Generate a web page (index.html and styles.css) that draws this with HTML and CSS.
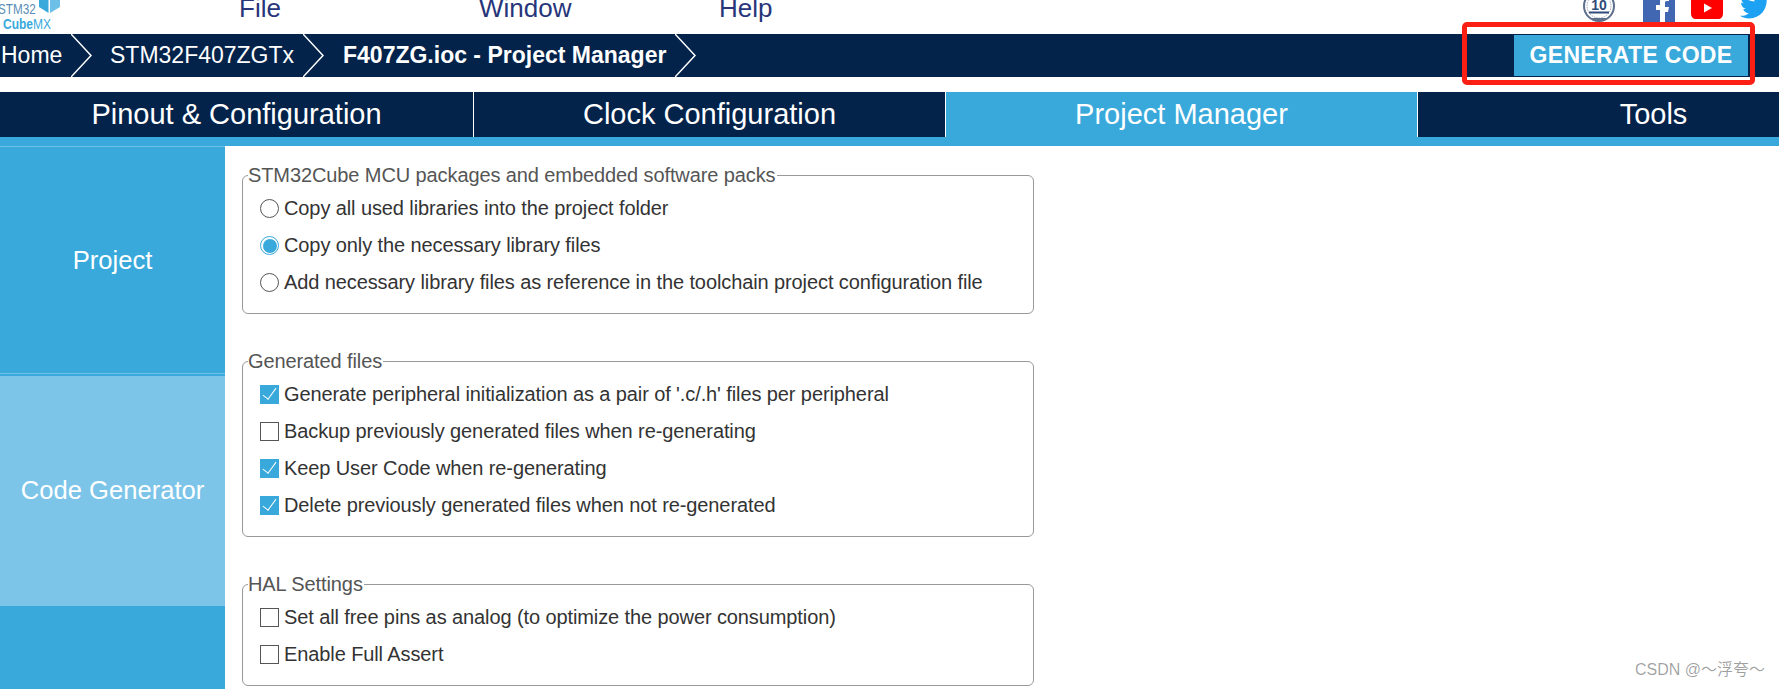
FILE: index.html
```html
<!DOCTYPE html>
<html lang="en">

<head>
  <meta charset="UTF-8">
  <meta name="viewport" content="width=device-width, initial-scale=1.0">
  <title>STM32CubeMX - Project Manager</title>
  <link rel="stylesheet" href="styles.css">
</head>

<body>
  <header class="topbar">
    <div class="logo">
      <svg class="logo-cube" viewBox="0 0 21 13" width="21" height="13">
        <path d="M0 0h9.500v13L0 7z" fill="#39a9dc" />
        <path d="M11 0h10v7l-10 6z" fill="#6cc0e8" />
      </svg>
      <div class="logo-stm">STM32</div>
      <div class="logo-cubemx"><b>Cube</b>MX</div>
    </div>
    <nav class="menu">
      <span class="menu-item">File</span>
      <span class="menu-item">Window</span>
      <span class="menu-item">Help</span>
    </nav>
    <div class="social">
      <svg class="seal" viewBox="0 0 32 22" width="32" height="22">
        <circle cx="16" cy="6" r="15" fill="#fff" stroke="#5d6f8c" stroke-width="2" />
        <circle cx="16" cy="6" r="12" fill="none" stroke="#9aa6b8" stroke-width="1" stroke-dasharray="1.500 1" />
        <text class="seal-num" x="16" y="10" text-anchor="middle">10</text>
        <path d="M6 12.500h20" stroke="#2d4a7a" stroke-width="2" />
        <path d="M9 19h14" stroke="#5d6f8c" stroke-width="2" />
      </svg>
      <svg class="fb" viewBox="0 0 32 22" width="32" height="22">
        <rect width="32" height="22" fill="#4267b2" />
        <path d="M17 22V10h-4V5h4V2c0-4 2-6 6-6h3v5h-2c-2 0-2 1-2 2v4h4l-1 5h-3v12z" fill="#fff" />
      </svg>
      <svg class="yt" viewBox="0 0 32 19" width="32" height="19">
        <path d="M0 0h32v13c0 4-2 6-5 6H5c-3 0-5-2-5-6z" fill="#ff0000" />
        <path d="M13 3.500l8 4.500-8 4.500z" fill="#fff" />
      </svg>
      <svg class="tw" viewBox="0 0 30 21" width="30" height="21">
        <path d="M30 -3c-1 .5-2 1-3.500 1.200 1.200-.8 2-2 2.500-3.200-1.200 .7-2.500 1.200-3.900 1.500C23.900-5 22.300-6 20.500-6c-3.400 0-6.100 2.800-6.100 6.200 0 .5 0 1 .2 1.400C9.500 1.300 5 -1.100 2 -4.900c-.5 .9-.8 2-.8 3.100 0 2.200 1.100 4.100 2.700 5.200-1 0-2-.3-2.800-.8v.1c0 3 2.100 5.500 4.900 6.100-.5 .1-1.100 .2-1.600 .2-.4 0-.8 0-1.200-.1 .8 2.500 3 4.300 5.700 4.300-2.100 1.700-4.700 2.600-7.600 2.600-.5 0-1 0-1.500-.1 2.700 1.800 5.900 2.800 9.400 2.800 11.300 0 17.500-9.500 17.500-17.700v-.8c1.200-.9 2.200-2 3-3.200z" fill="#1da1f2" />
      </svg>
    </div>
  </header>

  <div class="crumbs">
    <span class="crumb crumb-home">Home</span>
    <svg class="chevron" viewBox="0 0 21 43" width="21" height="43"><path d="M0 0l20 21.500L0 43" /></svg>
    <span class="crumb crumb-chip">STM32F407ZGTx</span>
    <svg class="chevron" viewBox="0 0 21 43" width="21" height="43"><path d="M0 0l20 21.500L0 43" /></svg>
    <span class="crumb crumb-current">F407ZG.ioc - Project Manager</span>
    <svg class="chevron" viewBox="0 0 21 43" width="21" height="43"><path d="M0 0l20 21.500L0 43" /></svg>
    <button class="generate">GENERATE CODE</button>
  </div>

  <div class="tabs">
    <div class="tab">Pinout &amp; Configuration</div>
    <div class="tab">Clock Configuration</div>
    <div class="tab active">Project Manager</div>
    <div class="tab">Tools</div>
  </div>
  <div class="tab-strip"></div>

  <div class="content">
    <aside class="sidebar">
      <div class="side-item side-project">Project</div>
      <div class="side-item side-code">Code Generator</div>
    </aside>

    <main class="panels">
      <fieldset class="group group-packages">
        <legend>STM32Cube MCU packages and embedded software packs</legend>
        <div class="row"><span class="radio"></span>Copy all used libraries into the project folder</div>
        <div class="row"><span class="radio checked"></span>Copy only the necessary library files</div>
        <div class="row"><span class="radio"></span>Add necessary library files as reference in the toolchain project configuration file</div>
      </fieldset>

      <fieldset class="group group-files">
        <legend>Generated files</legend>
        <div class="row"><span class="check checked"></span>Generate peripheral initialization as a pair of '.c/.h' files per peripheral</div>
        <div class="row"><span class="check"></span>Backup previously generated files when re-generating</div>
        <div class="row"><span class="check checked"></span>Keep User Code when re-generating</div>
        <div class="row"><span class="check checked"></span>Delete previously generated files when not re-generated</div>
      </fieldset>

      <fieldset class="group group-hal">
        <legend>HAL Settings</legend>
        <div class="row"><span class="check"></span>Set all free pins as analog (to optimize the power consumption)</div>
        <div class="row"><span class="check"></span>Enable Full Assert</div>
      </fieldset>
    </main>
  </div>

  <!-- annotation drawn over the screenshot -->
  <div class="highlight"></div>
  <div class="watermark">CSDN @～浮夸～</div>
</body>

</html>
```

FILE: styles.css
```css
html,
body {
  margin: 0;
  height: 689px;
  overflow: hidden;
}

body {
  position: relative;
  font-family: "Liberation Sans", Arial, sans-serif;
  background-color: #fff;
  color: #333;
}

/* top bar */
.topbar {
  display: flex;
  height: 34px;
  overflow: hidden;
}

.logo {
  position: relative;
  width: 239px;
  flex: none;
}

.logo-cube {
  position: absolute;
  left: 39px;
  top: 0;
}

.logo-stm {
  margin: 2px 0 0 -2px;
  height: 14px;
  font-size: 15px;
  line-height: 14px;
  color: #5b8db5;
  transform: scaleX(0.78);
  transform-origin: left;
}

.logo-cubemx {
  margin: 1px 0 0 3px;
  font-size: 15px;
  line-height: 13px;
  color: #39a9dc;
  transform: scaleX(0.8);
  transform-origin: left;
}

.menu {
  display: flex;
}

.menu-item {
  width: 240px;
  margin-top: -6px;
  font-size: 26px;
  line-height: 28px;
  color: #27357a;
}

.social {
  display: flex;
  align-items: flex-start;
  margin-left: auto;
  padding-right: 9px;
}

.fb {
  margin-left: 28px;
}

.yt {
  margin-left: 16px;
}

.tw {
  margin-left: 17px;
}

.seal-num {
  font-size: 14px;
  font-weight: bold;
  fill: #2d4a7a;
}

/* breadcrumb */
.crumbs {
  display: flex;
  align-items: center;
  height: 43px;
  background-color: #03234b;
  color: #fff;
  font-size: 23px;
}

.crumb {
  white-space: nowrap;
}

.crumb-home {
  margin-left: 1px;
  width: 70px;
}

.crumb-chip {
  margin-left: 18px;
  width: 193px;
}

.crumb-current {
  margin-left: 19px;
  width: 332px;
  font-weight: bold;
}

.chevron {
  flex: none;
  fill: none;
  stroke: #fff;
  stroke-width: 1.500;
}

.generate {
  margin: 0 31px 0 auto;
  width: 234px;
  height: 41px;
  padding: 0;
  border: none;
  background-color: #39a9dc;
  color: #fff;
  font-family: inherit;
  font-size: 23px;
  font-weight: bold;
  letter-spacing: 0.3px;
}

/* main tabs */
.tabs {
  display: flex;
  height: 45px;
  margin-top: 15px;
  overflow: hidden;
  background-color: #03234b;
}

.tab {
  flex: none;
  width: 472px;
  box-sizing: border-box;
  border-right: 1px solid #fff;
  color: #fff;
  font-size: 29px;
  line-height: 45px;
  text-align: center;
}

.tab:first-child {
  width: 474px;
}

.tab.active {
  background-color: #39a9dc;
}

.tab-strip {
  height: 9px;
  background-color: #39a9dc;
}

/* content */
.content {
  display: flex;
  height: 543px;
}

.sidebar {
  flex: none;
  width: 225px;
  background-color: #39a9dc;
  color: #fff;
  font-size: 25.600px;
}

.side-item {
  display: flex;
  align-items: center;
  justify-content: center;
  box-sizing: border-box;
}

.side-project {
  height: 228px;
  border-top: 1px solid #6fc0e8;
  border-bottom: 1px solid #6fc0e8;
}

.side-code {
  height: 230px;
  margin-top: 2px;
  padding-bottom: 2px;
  background-color: #7cc5e9;
}

.panels {
  padding: 18px 0 0 17px;
}

.group {
  box-sizing: border-box;
  width: 792px;
  margin: 0 0 36px;
  padding: 4px 0 0 17px;
  border: 1px solid #999;
  border-radius: 6px;
  min-inline-size: 0;
}

.group-packages {
  height: 150px;
}

.group-files {
  height: 187px;
}

.group-hal {
  height: 113px;
}

.group legend {
  margin-left: -12px;
  padding: 0 1px 0 0;
  font-size: 20px;
  letter-spacing: -0.1px;
  line-height: 22px;
  color: #555;
}

.row {
  display: flex;
  align-items: center;
  height: 37px;
  font-size: 20px;
  letter-spacing: -0.1px;
  color: #333;
  white-space: nowrap;
}

.radio,
.check {
  position: relative;
  flex: none;
  box-sizing: border-box;
  width: 19px;
  height: 19px;
  margin-right: 5px;
  border: 1px solid #555;
  background-color: #fff;
}

.radio {
  border-radius: 50%;
}

.radio.checked {
  border-color: #39a9dc;
}

.radio.checked::after {
  content: "";
  position: absolute;
  inset: 1.500px;
  border-radius: 50%;
  background-color: #39a9dc;
}

.check.checked {
  border-color: #39a9dc;
  background-color: #39a9dc;
}

.check.checked::after {
  content: "";
  position: absolute;
  left: 4.500px;
  top: -1.300px;
  width: 6px;
  height: 13px;
  border-right: 1.500px solid #fff;
  border-bottom: 1.500px solid #fff;
  transform: rotate(36deg);
}

/* overlays */
.highlight {
  position: absolute;
  left: 1462px;
  top: 22px;
  width: 293px;
  height: 63px;
  box-sizing: border-box;
  border: 5px solid #fb1f14;
  border-radius: 5px;
}

.watermark {
  position: absolute;
  right: 14px;
  top: 660px;
  font-family: "Liberation Sans", "Noto Sans CJK SC", sans-serif;
  font-size: 16px;
  line-height: 20px;
  color: rgba(0, 0, 0, 0.38);
}
```
